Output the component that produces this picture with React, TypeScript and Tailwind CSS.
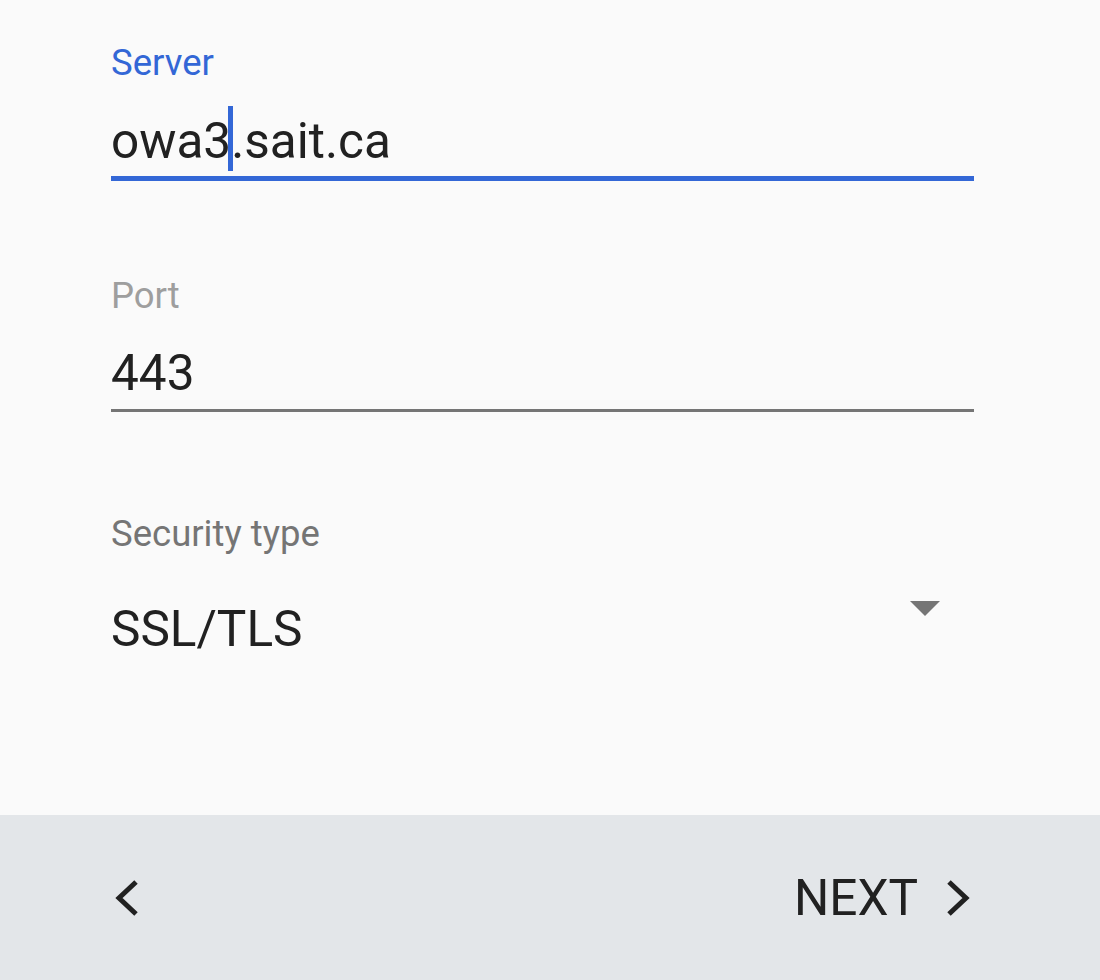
import React from "react";

function Chevron({ dir }: { dir: "left" | "right" }) {
  const points = dir === "left" ? "25,4 8,20 25,36" : "7,4 24,20 7,36";
  return (
    <svg width="32" height="40" viewBox="0 0 32 40" fill="none" aria-hidden="true">
      <polyline points={points} stroke="#212121" strokeWidth="5" strokeLinejoin="miter" />
    </svg>
  );
}

export default function App() {
  return (
    <div
      className="flex h-[980px] w-[1100px] flex-col bg-[#fafafa] text-[#212121]"
      style={{ fontFamily: "Roboto, 'Noto Sans', sans-serif" }}
    >
      <div className="flex flex-1 flex-col pl-[111px] pr-[126px] pt-[43px]">
        {/* Server - focused */}
        <label className="text-[36.5px] leading-[40px] text-[#3367d6]">Server</label>
        <div className="mt-[28px] text-[49.5px] leading-[60px]">
          owa3
          <span className="relative inline-block h-[60px] w-0 align-top">
            <span className="absolute left-[-3px] top-[-5px] h-[65px] w-[5px] bg-[#3367d6]" />
          </span>
          .sait.ca
        </div>
        <div className="mt-[5px] h-[5px] bg-[#3367d6]" />

        {/* Port */}
        <label className="mt-[95px] text-[36.5px] leading-[40px] text-[#9e9e9e]">Port</label>
        <div className="mt-[27px] text-[49.5px] leading-[60px]">443</div>
        <div className="mt-[6px] h-[3px] bg-[#757575]" />

        {/* Security type */}
        <label className="mt-[102px] text-[36.5px] leading-[40px] text-[#757575]">Security type</label>
        <div className="mt-[45px] flex items-start justify-between pr-[34px]">
          <span className="text-[49.5px] leading-[60px]">SSL/TLS</span>
          <svg width="30" height="15" viewBox="0 0 30 15" className="mt-[2px]" aria-hidden="true">
            <polygon points="0,0 30,0 15,15" fill="#757575" />
          </svg>
        </div>
      </div>

      <div className="flex h-[165px] items-center justify-between bg-[#e3e6e9] pl-[111px] pr-[126px]">
        <button className="flex items-center">
          <Chevron dir="left" />
        </button>
        <button className="flex items-center gap-[24px] text-[49.5px] leading-[60px] text-[#212121]">
          <span>NEXT</span>
          <Chevron dir="right" />
        </button>
      </div>
    </div>
  );
}
